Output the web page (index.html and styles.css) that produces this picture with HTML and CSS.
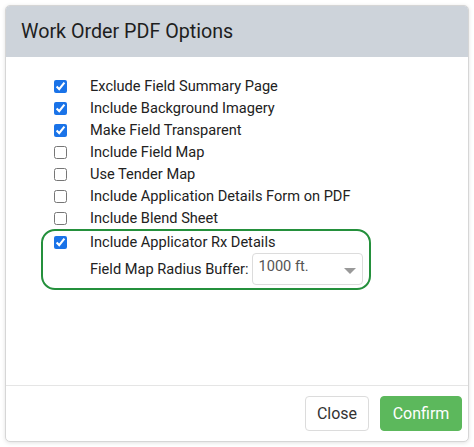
FILE: index.html
```html
<!DOCTYPE html>
<html>
<head>
<meta charset="utf-8">
<link rel="stylesheet" href="styles.css">
</head>
<body>
<div class="modal">
  <div class="modal-header">Work Order PDF Options</div>
  <div class="modal-body">
    <label class="row"><input type="checkbox" checked><span>Exclude Field Summary Page</span></label>
    <label class="row"><input type="checkbox" checked><span>Include Background Imagery</span></label>
    <label class="row"><input type="checkbox" checked><span>Make Field Transparent</span></label>
    <label class="row"><input type="checkbox"><span>Include Field Map</span></label>
    <label class="row"><input type="checkbox"><span>Use Tender Map</span></label>
    <label class="row"><input type="checkbox"><span>Include Application Details Form on PDF</span></label>
    <label class="row"><input type="checkbox"><span>Include Blend Sheet</span></label>
    <div class="highlight">
      <label class="row"><input type="checkbox" checked><span>Include Applicator Rx Details</span></label>
      <div class="buffer-row">
        <span class="buffer-label">Field Map Radius Buffer:</span>
        <div class="select">
          <span>1000 ft.</span>
          <span class="caret"></span>
        </div>
      </div>
    </div>
  </div>
  <div class="modal-footer">
    <button class="btn btn-close">Close</button>
    <button class="btn btn-confirm">Confirm</button>
  </div>
</div>
</body>
</html>
```

FILE: styles.css
```css
html, body {
  margin: 0;
  padding: 0;
  background: #ffffff;
}
body {
  font-family: Roboto, "Liberation Sans", Arial, sans-serif;
  color: #222;
  padding: 5px;
}
.modal {
  width: 462px;
  height: 435px;
  border: 1px solid #d6d6d6;
  border-radius: 5px;
  box-shadow: 0 1px 4px rgba(0,0,0,0.12);
  display: flex;
  flex-direction: column;
  overflow: hidden;
  background: #fff;
}
.modal-header {
  background: #cdd3da;
  height: 51px;
  box-sizing: border-box;
  padding-left: 15px;
  display: flex;
  align-items: center;
  font-size: 19.7px;
  color: #1e1e1e;
}
.modal-body {
  flex: 1;
  padding: 18px 0 0 47px;
  box-sizing: border-box;
}
.row {
  display: flex;
  align-items: center;
  height: 22px;
  font-size: 14.6px;
  color: #222;
}
.row input {
  width: 13px;
  height: 13px;
  margin: 0 23px 0 1px;
  accent-color: #1a73e8;
}
.highlight {
  margin-left: -12px;
  width: 330px;
  box-sizing: border-box;
  border: 2.5px solid #24903c;
  border-radius: 14px;
  padding: 0 0 3px 10px;
}
.buffer-row {
  display: flex;
  align-items: center;
  margin-left: 37px;
  font-size: 14.6px;
}
.buffer-label {
  margin-right: 3px;
}
.select {
  width: 111px;
  height: 32px;
  box-sizing: border-box;
  border: 1px solid #dcdcdc;
  border-radius: 4px;
  display: flex;
  align-items: center;
  justify-content: space-between;
  padding: 0 6px 0 6px;
  font-size: 14.6px;
  color: #555;
}
.select span:first-child {
  margin-top: -6px;
}
.caret {
  width: 0;
  height: 0;
  border-left: 6px solid transparent;
  border-right: 6px solid transparent;
  border-top: 6px solid #999;
  margin-top: 4px;
}
.modal-footer {
  border-top: 1px solid #e5e5e5;
  height: 56px;
  box-sizing: border-box;
  padding: 10px 6px 10px 0;
  display: flex;
  justify-content: flex-end;
  gap: 11px;
}
.btn {
  font-family: Roboto, "Liberation Sans", Arial, sans-serif;
  font-size: 16px;
  height: 35px;
  border-radius: 4px;
  cursor: pointer;
  padding: 0;
}
.btn-close {
  width: 64px;
  background: #fff;
  border: 1px solid #dcdcdc;
  color: #333;
}
.btn-confirm {
  width: 82px;
  background: #5cb85c;
  border: 1px solid #5cb85c;
  color: #fff;
}
```
